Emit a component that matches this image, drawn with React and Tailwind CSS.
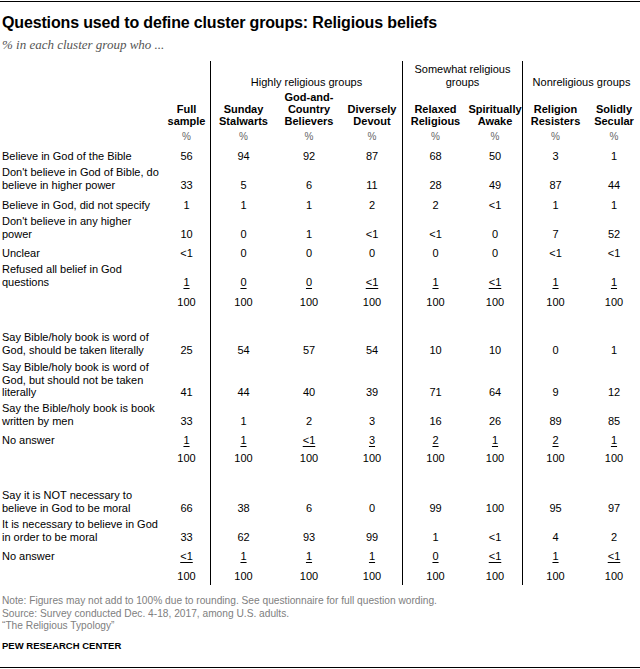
import React from 'react';

const cols = 'grid grid-cols-[163px_47px_66px_66px_60px_66px_54px_66px_52px]';
const lined = [2, 5, 7];

const headers = [
  ['Full', 'sample'],
  ['Sunday', 'Stalwarts'],
  ['God-and-', 'Country', 'Believers'],
  ['Diversely', 'Devout'],
  ['Relaxed', 'Religious'],
  ['Spiritually', 'Awake'],
  ['Religion', 'Resisters'],
  ['Solidly', 'Secular'],
];

// h = row height in px, u = last row before the total (underlined)
const rows = [
  { h: 'h-[19px]', label: ['Believe in God of the Bible'], v: ['56', '94', '92', '87', '68', '50', '3', '1'] },
  { h: 'h-[29px]', label: ["Don't believe in God of Bible, do", 'believe in higher power'], v: ['33', '5', '6', '11', '28', '49', '87', '44'] },
  { h: 'h-[20px]', label: ['Believe in God, did not specify'], v: ['1', '1', '1', '2', '2', '<1', '1', '1'] },
  { h: 'h-[29px]', label: ["Don't believe in any higher", 'power'], v: ['10', '0', '1', '<1', '<1', '0', '7', '52'] },
  { h: 'h-[19px]', label: ['Unclear'], v: ['<1', '0', '0', '0', '0', '0', '<1', '<1'] },
  { h: 'h-[29px]', label: ['Refused all belief in God', 'questions'], v: ['1', '0', '0', '<1', '1', '<1', '1', '1'], u: true },
  { h: 'h-[20px]', total: true },
  { h: 'h-[19px]', spacer: true },
  { h: 'h-[29px]', label: ['Say Bible/holy book is word of', 'God, should be taken literally'], v: ['25', '54', '57', '54', '10', '10', '0', '1'] },
  { h: 'h-[42.5px]', label: ['Say Bible/holy book is word of', 'God, but should not be taken', 'literally'], v: ['41', '44', '40', '39', '71', '64', '9', '12'] },
  { h: 'h-[28.5px]', label: ['Say the Bible/holy book is book', 'written by men'], v: ['33', '1', '2', '3', '16', '26', '89', '85'] },
  { h: 'h-[19px]', label: ['No answer'], v: ['1', '1', '<1', '3', '2', '1', '2', '1'], u: true },
  { h: 'h-[18px]', total: true },
  { h: 'h-[21px]', spacer: true },
  { h: 'h-[29px]', label: ['Say it is NOT necessary to', 'believe in God to be moral'], v: ['66', '38', '6', '0', '99', '100', '95', '97'] },
  { h: 'h-[29px]', label: ['It is necessary to believe in God', 'in order to be moral'], v: ['33', '62', '93', '99', '1', '<1', '4', '2'] },
  { h: 'h-[19px]', label: ['No answer'], v: ['<1', '1', '1', '1', '0', '<1', '1', '<1'], u: true },
  { h: 'h-[20px]', total: true },
];

const Cell = ({ idx, className = '', children }) => (
  <div className={`${lined.includes(idx) ? 'border-l border-black' : ''} ${className}`}>{children}</div>
);

const Row = ({ row }) => {
  const values = row.total ? Array(8).fill('100') : row.v || Array(8).fill('');
  return (
    <div className={`${cols} ${row.h}`}>
      <div className="flex items-end pb-[3px] pl-[2px] leading-[12.5px]">
        <div>
          {(row.label || []).map((l, i) => (
            <div key={i} className="whitespace-nowrap">{l}</div>
          ))}
        </div>
      </div>
      {values.map((val, i) => (
        <Cell key={i} idx={i + 1} className="flex items-end justify-center pb-[3px] leading-[12.5px]">
          <span className={row.u ? 'underline underline-offset-2 decoration-1' : ''}>{val}</span>
        </Cell>
      ))}
    </div>
  );
};

export default function App() {
  return (
    <div className="w-[640px] h-[669px] bg-white text-black font-['Liberation_Sans',Arial,sans-serif] text-[11px] overflow-hidden">
      <div className="mt-px border-t border-black" />
      <h1 className="mt-[11px] pl-[2px] text-[16px] leading-[20px] font-bold tracking-[-0.15px]">
        Questions used to define cluster groups: Religious beliefs
      </h1>
      <p className="mt-[4px] pl-[2px] font-['Liberation_Serif',serif] italic text-[13px] leading-[16px] text-[#555]">
        % in each cluster group who ...
      </p>

      <div className="mt-[8px]">
        {/* group labels */}
        <div className={`${cols} h-[27.25px] leading-[12.5px]`}>
          <div className="col-span-2" />
          <div className="col-span-3 border-l border-black flex items-end justify-center">
            Highly religious groups
          </div>
          <div className="col-span-2 border-l border-black flex items-end justify-center pt-[2px] text-center">
            Somewhat religious
            <br />
            groups
          </div>
          <div className="col-span-2 border-l border-black flex items-end justify-center">
            Nonreligious groups
          </div>
        </div>

        {/* column names */}
        <div className={`${cols} h-[39px] font-bold leading-[12px]`}>
          <div />
          {headers.map((h, i) => (
            <Cell key={i} idx={i + 1} className="flex flex-col items-center justify-end text-center whitespace-nowrap">
              {h.map((l, j) => (
                <div key={j}>{l}</div>
              ))}
            </Cell>
          ))}
        </div>

        <div className={`${cols} h-[19px]`}>
          <div />
          {headers.map((_, i) => (
            <Cell key={i} idx={i + 1} className="flex items-end justify-center pb-[3px] text-[10px] leading-[12.5px] text-[#666]">
              %
            </Cell>
          ))}
        </div>

        {rows.map((row, i) => (
          <Row key={i} row={row} />
        ))}
      </div>

      <div className="mt-[9.5px] pl-[2px] text-[10.2px] leading-[12.75px] text-[#808080]">
        <div>Note: Figures may not add to 100% due to rounding. See questionnaire for full question wording.</div>
        <div>Source: Survey conducted Dec. 4-18, 2017, among U.S. adults.</div>
        <div>“The Religious Typology”</div>
      </div>
      <div className="mt-[7px] pl-[2px] text-[9.5px] leading-[12px] font-bold">PEW RESEARCH CENTER</div>
      <div className="mt-[15px] border-t border-black" />
    </div>
  );
}
